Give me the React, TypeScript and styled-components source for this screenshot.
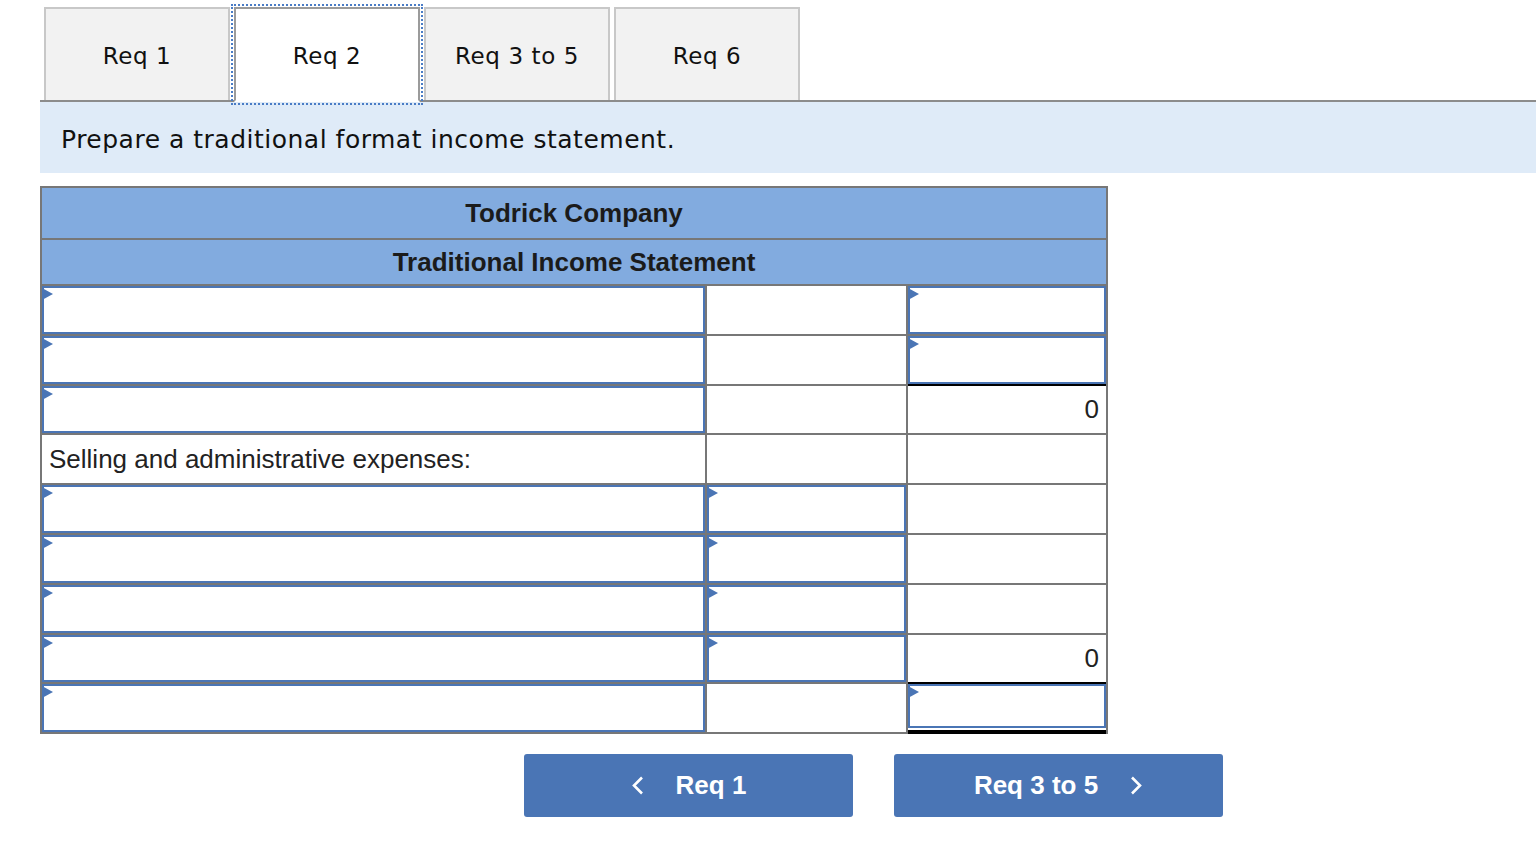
import React from 'react';
import styled, { createGlobalStyle, css } from 'styled-components';

const GlobalStyle = createGlobalStyle`
  body {
    margin: 0;
    background: #fff;
  }
`;

const Page = styled.div`
  padding: 7px 0 30px 40px;
`;

const TabBar = styled.div`
  display: flex;
  gap: 4px;
  padding-left: 4px;
  border-bottom: 2px solid #8c8c8c;
`;

const Tab = styled.button<{ $active?: boolean }>`
  width: 186px;
  height: ${(p) => (p.$active ? '95px' : '93px')};
  margin-bottom: ${(p) => (p.$active ? '-2px' : '0')};
  box-sizing: border-box;
  padding: 2px 0 0;
  border: 2px solid ${(p) => (p.$active ? '#9b9b9b' : '#c8c8c8')};
  border-bottom: ${(p) => (p.$active ? '2px solid #fff' : 'none')};
  background: ${(p) => (p.$active ? '#fff' : '#f2f2f2')};
  font-family: 'DejaVu Sans', Verdana, sans-serif;
  font-size: 23px;
  letter-spacing: 0.6px;
  color: #111;
  outline: ${(p) => (p.$active ? '2px dotted #4a7cc5' : 'none')};
  outline-offset: 1px;
  cursor: pointer;
`;

const Prompt = styled.div`
  height: 71px;
  box-sizing: border-box;
  padding: 4px 0 0 21px;
  display: flex;
  align-items: center;
  background: #dfebf8;
  font-family: 'DejaVu Sans', Verdana, sans-serif;
  font-size: 25px;
  letter-spacing: 0.5px;
  color: #111;
`;

const Sheet = styled.div`
  margin-top: 13px;
  width: 1068px;
  box-sizing: border-box;
  display: grid;
  grid-template-columns: 663px 199px 198px;
  grid-template-rows: 50px 44px repeat(9, 47.8px);
  gap: 2px;
  padding: 2px;
  background: #777;
`;

const Heading = styled.div`
  grid-column: 1 / -1;
  display: flex;
  align-items: center;
  justify-content: center;
  background: #82abdf;
  font-family: 'Liberation Sans', Arial, sans-serif;
  font-weight: bold;
  font-size: 26px;
  color: #1b1b1b;
`;

type Rule = 'top' | 'total';

const Cell = styled.div<{ $align?: 'left' | 'right'; $rule?: Rule }>`
  position: relative;
  display: flex;
  align-items: center;
  justify-content: ${(p) => (p.$align === 'right' ? 'flex-end' : 'flex-start')};
  box-sizing: border-box;
  padding: 0 7px;
  background: #fff;
  font-family: 'Liberation Sans', Arial, sans-serif;
  font-size: 26px;
  color: #222;
  ${(p) =>
    p.$rule === 'top' &&
    css`
      box-shadow: 0 -2px 0 #000;
    `}
`;

const FieldCell = styled.div<{ $rule?: Rule }>`
  position: relative;
  display: flex;
  box-sizing: border-box;
  background: #fff;
  ${(p) =>
    p.$rule === 'top' &&
    css`
      box-shadow: 0 -2px 0 #000;
    `}
  ${(p) =>
    p.$rule === 'total' &&
    css`
      box-shadow: 0 -2px 0 #000, 0 2px 0 #000;
      border-bottom: 2px solid #000;
      padding-bottom: 2px;
    `}
`;

const Field = styled.input`
  flex: 1;
  min-width: 0;
  margin: 0;
  padding: 0 8px;
  box-sizing: border-box;
  border: 2px solid #4a75b5;
  background: #fff;
  font-family: 'Liberation Sans', Arial, sans-serif;
  font-size: 26px;
  outline: none;
`;

const Marker = styled.span`
  position: absolute;
  top: 2px;
  left: 0;
  width: 0;
  height: 0;
  border-top: 6.5px solid transparent;
  border-bottom: 6.5px solid transparent;
  border-left: 11px solid #4a75b5;
`;

const Pager = styled.div`
  display: flex;
  gap: 41px;
  margin: 20px 0 0 484px;
`;

const PagerButton = styled.button`
  width: 329px;
  height: 63px;
  display: flex;
  align-items: center;
  justify-content: center;
  gap: 32px;
  border: none;
  border-radius: 3px;
  background: #4a75b5;
  color: #fff;
  font-family: 'Liberation Sans', Arial, sans-serif;
  font-weight: bold;
  font-size: 26px;
  cursor: pointer;
`;

const Chevron = ({ dir }: { dir: 'left' | 'right' }) => (
  <svg width="13" height="19" viewBox="0 0 13 19" fill="none">
    <path
      d={dir === 'left' ? 'M11 1.5 L3 9.5 L11 17.5' : 'M2 1.5 L10 9.5 L2 17.5'}
      stroke="#fff"
      strokeWidth="2.6"
    />
  </svg>
);

type Spec =
  | { kind: 'field'; rule?: Rule }
  | { kind: 'blank' }
  | { kind: 'label'; text: string }
  | { kind: 'value'; text: string; rule?: Rule };

const F: Spec = { kind: 'field' };
const B: Spec = { kind: 'blank' };

const rows: Spec[][] = [
  [F, B, F],
  [F, B, F],
  [F, B, { kind: 'value', text: '0', rule: 'top' }],
  [{ kind: 'label', text: 'Selling and administrative expenses:' }, B, B],
  [F, F, B],
  [F, F, B],
  [F, F, B],
  [F, F, { kind: 'value', text: '0' }],
  [F, B, { kind: 'field', rule: 'total' }],
];

const renderCell = (spec: Spec, key: string) => {
  switch (spec.kind) {
    case 'field':
      return (
        <FieldCell key={key} $rule={spec.rule}>
          <Field type="text" />
          <Marker />
        </FieldCell>
      );
    case 'label':
      return <Cell key={key}>{spec.text}</Cell>;
    case 'value':
      return (
        <Cell key={key} $align="right" $rule={spec.rule}>
          {spec.text}
        </Cell>
      );
    default:
      return <Cell key={key} />;
  }
};

const tabs = ['Req 1', 'Req 2', 'Req 3 to 5', 'Req 6'];

const App = () => {
  return (
    <Page>
      <GlobalStyle />
      <TabBar>
        {tabs.map((t) => (
          <Tab key={t} $active={t === 'Req 2'}>
            {t}
          </Tab>
        ))}
      </TabBar>
      <Prompt>Prepare a traditional format income statement.</Prompt>
      <Sheet>
        <Heading>Todrick Company</Heading>
        <Heading>Traditional Income Statement</Heading>
        {rows.map((row, r) => row.map((spec, c) => renderCell(spec, `${r}-${c}`)))}
      </Sheet>
      <Pager>
        <PagerButton>
          <Chevron dir="left" />
          Req 1
        </PagerButton>
        <PagerButton>
          Req 3 to 5
          <Chevron dir="right" />
        </PagerButton>
      </Pager>
    </Page>
  );
};

export default App;
